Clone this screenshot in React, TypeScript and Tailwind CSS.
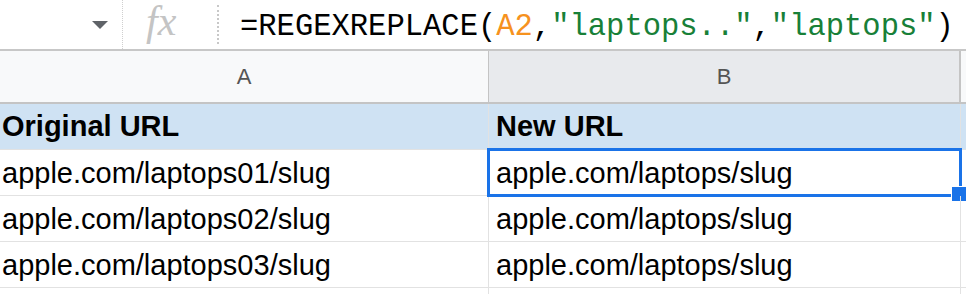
const rows = [
  ['apple.com/laptops01/slug', 'apple.com/laptops/slug'],
  ['apple.com/laptops02/slug', 'apple.com/laptops/slug'],
  ['apple.com/laptops03/slug', 'apple.com/laptops/slug'],
];

function FormulaBar() {
  return (
    <div className="flex h-[51px] items-stretch border-b-2 border-[#c7c7c7] bg-white">
      <div className="flex w-[123px] items-center justify-end border-r border-dotted border-[#cfcfcf] pr-[14px]">
        <svg width="16" height="8" viewBox="0 0 16 8">
          <polygon points="0,0 16,0 8,8" fill="#5f6368" />
        </svg>
      </div>
      <div className="flex w-[94px] items-start pl-[23px]">
        <span className="pr-[4px] font-['Liberation_Serif',serif] text-[42px] italic leading-[42px] text-[#c4c4c4]">fx</span>
      </div>
      <div className="my-[5px] w-[2px] border-l-2 border-dotted border-[#c8c8c8]" />
      <div className="flex items-center pl-[21px] pt-[5px] font-['Liberation_Mono','Courier_New',monospace] text-[30.5px] leading-none text-black">
        <span>=REGEXREPLACE(</span>
        <span className="text-[#f6921e]">A2</span>
        <span>,</span>
        <span className="text-[#188038]">"laptops.."</span>
        <span>,</span>
        <span className="text-[#188038]">"laptops"</span>
        <span>)</span>
      </div>
    </div>
  );
}

function ColumnHeaders() {
  return (
    <div className="flex h-[53px] border-b-2 border-[#c4c4c4] text-[22px] leading-none text-[#555]">
      <div className="flex w-[489px] items-center justify-center border-r border-[#c4c4c4] bg-[#f8f9fa]">A</div>
      <div className="flex w-[472px] items-center justify-center border-r-2 border-[#c4c4c4] bg-[#e8eaed]">B</div>
      <div className="flex-1 bg-[#f8f9fa]" />
    </div>
  );
}

export default function App() {
  return (
    <div className="h-[294px] w-[966px] overflow-hidden bg-white font-['Liberation_Sans',Arial,sans-serif]">
      <FormulaBar />
      <ColumnHeaders />
      <div className="flex h-[46px] border-b border-[#e2e2e2] bg-[#cfe2f3] text-[29px] font-bold leading-[45px] text-black">
        <div className="w-[489px] border-r border-[#e2e2e2] pl-[2px]">Original URL</div>
        <div className="w-[472px] border-r border-[#e2e2e2] pl-[7px]">New URL</div>
        <div className="flex-1" />
      </div>
      {rows.map((r, i) => (
        <div key={i} className="flex h-[46px] border-b border-[#e2e2e2] text-[29px] leading-[46px] text-black">
          <div className="w-[489px] border-r border-[#e2e2e2] pl-[2px]">{r[0]}</div>
          <div className="relative w-[472px] border-r border-[#e2e2e2] pl-[7px]">
            {r[1]}
            {i === 0 && (
              <>
                <div className="absolute -left-[2px] -top-[2px] h-[49px] w-[475px] border-[3px] border-[#1a73e8]" />
                <div className="absolute left-[462px] top-[36px] h-[16px] w-[16px] border border-white bg-[#1a73e8]" />
              </>
            )}
          </div>
          <div className="flex-1" />
        </div>
      ))}
      <div className="flex h-[20px]">
        <div className="w-[489px] border-r border-[#e2e2e2]" />
        <div className="w-[472px] border-r border-[#e2e2e2]" />
      </div>
    </div>
  );
}
